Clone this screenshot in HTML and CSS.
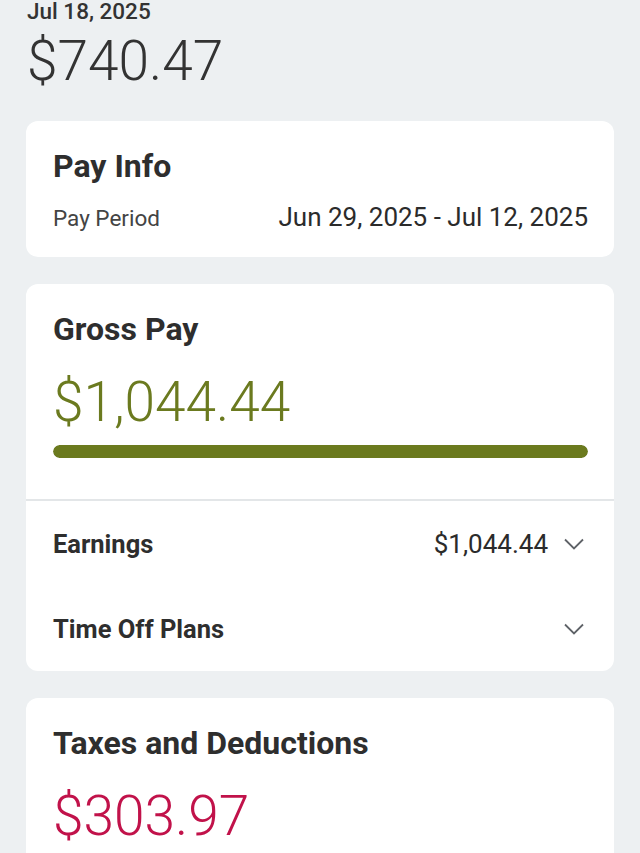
FILE: index.html
```html
<!DOCTYPE html>
<html>
<head>
<meta charset="utf-8">
<link rel="stylesheet" href="styles.css">
</head>
<body>
<div class="page">
  <div class="summary">
    <div class="date">Jul 18, 2025</div>
    <div class="net">$740.47</div>
  </div>

  <section class="card">
    <div class="card-body payinfo">
      <h2 class="title">Pay Info</h2>
      <div class="row">
        <span class="label">Pay Period</span>
        <span class="value">Jun 29, 2025 - Jul 12, 2025</span>
      </div>
    </div>
  </section>

  <section class="card">
    <div class="card-body gross">
      <h2 class="title">Gross Pay</h2>
      <div class="amount green">$1,044.44</div>
      <div class="bar"><div class="fill" style="width:100%"></div></div>
    </div>
    <div class="divider"></div>
    <div class="list">
      <div class="item">
        <span class="item-name">Earnings</span>
        <span class="item-right">
          <span class="item-value">$1,044.44</span>
          <svg class="chev" width="20" height="12" viewBox="0 0 20 12"><path d="M1 1.5 L10 10.5 L19 1.5" fill="none" stroke="#5f6368" stroke-width="1.8"/></svg>
        </span>
      </div>
      <div class="item">
        <span class="item-name">Time Off Plans</span>
        <span class="item-right">
          <svg class="chev" width="20" height="12" viewBox="0 0 20 12"><path d="M1 1.5 L10 10.5 L19 1.5" fill="none" stroke="#5f6368" stroke-width="1.8"/></svg>
        </span>
      </div>
    </div>
  </section>

  <section class="card">
    <div class="card-body taxes">
      <h2 class="title">Taxes and Deductions</h2>
      <div class="amount red">$303.97</div>
    </div>
  </section>
</div>
</body>
</html>
```

FILE: styles.css
```css
* { box-sizing: border-box; }
html, body { margin: 0; padding: 0; }
body {
  background: #edf0f2;
  font-family: Roboto, "Noto Sans", "Liberation Sans", sans-serif;
  color: #2b2b2b;
  overflow: hidden;
}
.page {
  padding: 0 26px;
  margin-top: -2px;
}
.summary { padding-left: 1px; }
.date {
  font-size: 22.5px;
  font-weight: 500;
  line-height: 26px;
  color: #333;
}
.net {
  font-size: 55px;
  font-weight: 300;
  line-height: 66px;
  color: #333;
  margin-top: 4px;
}
.card {
  background: #fff;
  border-radius: 12px;
  margin-top: 27px;
  overflow: hidden;
}
.card-body { padding: 0 26px 0 27px; }
.title {
  margin: 0;
  font-size: 32px;
  font-weight: 700;
  line-height: 36px;
  color: #2e2e2e;
}
.payinfo { padding-top: 27px; padding-bottom: 25px; }
.row {
  display: flex;
  justify-content: space-between;
  align-items: baseline;
  margin-top: 18px;
}
.label { font-size: 22.5px; color: #444; }
.value { font-size: 26px; color: #2b2b2b; }
.gross { padding-top: 27px; padding-bottom: 41px; }
.amount {
  font-size: 55px;
  font-weight: 300;
  line-height: 64px;
  margin-top: 23px;
}
.green { color: #6b7a1f; }
.red { color: #c1124a; }
.bar {
  height: 13px;
  margin-top: 11px;
  border-radius: 7px;
  background: #e6e8ea;
  overflow: hidden;
}
.fill { height: 100%; background: #6b7a1e; border-radius: 7px; }
.divider { height: 2px; background: #e3e6e8; }
.list { padding: 0 26px 0 27px; }
.item {
  display: flex;
  justify-content: space-between;
  align-items: center;
  height: 85px;
}
.item-name { font-size: 25.5px; font-weight: 700; color: #2e2e2e; }
.item-right { display: flex; align-items: center; gap: 16px; }
.item-value { font-size: 26px; color: #2b2b2b; }
.chev { margin-right: 4px; }
.taxes { padding-top: 27px; padding-bottom: 30px; }
```
